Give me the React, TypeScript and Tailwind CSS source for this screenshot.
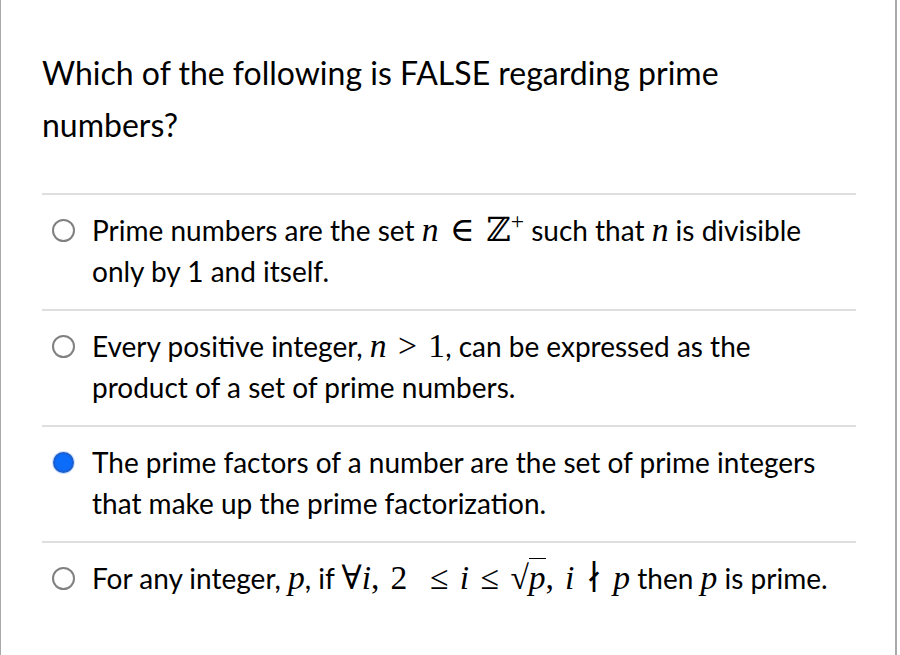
import React from 'react';

const mathFont = { fontFamily: '"Liberation Serif", "DejaVu Serif", serif' };

// KaTeX-ish inline math, approximated with serif italics
function M({ children }: { children: React.ReactNode }) {
  return (
    <span className="text-[1.2em] leading-none whitespace-nowrap" style={mathFont}>
      {children}
    </span>
  );
}

function I({ children }: { children: React.ReactNode }) {
  return <span className="italic">{children}</span>;
}

// relation with thick spacing on both sides
function Rel({ children }: { children: React.ReactNode }) {
  return <span className="mx-[0.34em]">{children}</span>;
}

function Sp({ w = 'w-[0.33em]' }: { w?: string }) {
  return <span className={`inline-block ${w}`} />;
}

function Radio({ checked = false }: { checked?: boolean }) {
  if (checked) {
    return (
      <span className="mt-[9px] flex h-[23px] w-[23px] shrink-0 items-center justify-center rounded-full bg-[#cfe0fb]">
        <span className="block h-[21px] w-[21px] rounded-full border-2 border-[#1c5fd0] bg-[#0a6cf8]" />
      </span>
    );
  }
  return (
    <span className="mt-[9px] block h-[23px] w-[23px] shrink-0 rounded-full border-2 border-[#808080] bg-white" />
  );
}

function Option({ checked, children }: { checked?: boolean; children: React.ReactNode }) {
  return (
    <div className="flex items-start gap-[17px] border-t-2 border-[#dedede] pt-[15px] pb-[17px] pl-[10px]">
      <Radio checked={checked} />
      <div className="w-[748px] text-[28px] leading-[41px] text-black">{children}</div>
    </div>
  );
}

export default function App() {
  return (
    <div
      className="h-[655px] w-[897px] border-l border-r-2 border-[#a9a9a9] bg-white"
      style={{ fontFamily: 'Lato, "Open Sans", sans-serif' }}
    >
      <div className="w-[855px] pl-[41px] pt-[47px]">
        <h2 className="w-[720px] pb-[42px] text-[32px] font-normal leading-[52px] text-black">
          Which of the following is FALSE regarding prime numbers?
        </h2>

        <Option>
          Prime numbers are the set{' '}
          <M>
            <I>n</I>
            <Rel>∈</Rel>ℤ<sup className="text-[0.7em]">+</sup>
          </M>{' '}
          such that <M><I>n</I></M> is divisible only by 1 and itself.
        </Option>

        <Option>
          Every positive integer,{' '}
          <M>
            <I>n</I>
            <Rel>&gt;</Rel>1
          </M>
          , can be expressed as the product of a set of prime numbers.
        </Option>

        <Option checked>
          The prime factors of a number are the set of prime integers that make up the prime factorization.
        </Option>

        <Option>
          For any integer, <M><I>p</I></M>, if{' '}
          <M>
            ∀<I>i</I>,<Sp />2<Sp />
            <Rel>≤</Rel>
            <I>i</I>
            <Rel>≤</Rel>√<span className="border-t-[1.5px] border-black italic">p</span>,<Sp />
            <I>i</I>
            <Rel>∤</Rel>
            <I>p</I>
          </M>{' '}
          then <M><I>p</I></M> is prime.
        </Option>
      </div>
    </div>
  );
}
